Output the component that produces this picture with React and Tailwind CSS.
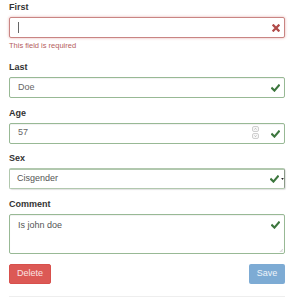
import React from 'react'

function Check({ className }) {
  return (
    <svg viewBox="0 0 10 9" className={className} aria-hidden="true">
      <path d="M1.2 4.8 L3.8 7.4 L8.8 1.6" fill="none" stroke="#3c763d" strokeWidth="2.4" strokeLinecap="square" />
    </svg>
  )
}

function Cross({ className }) {
  return (
    <svg viewBox="0 0 8 8" className={className} aria-hidden="true">
      <path d="M1.4 1.4 L6.6 6.6 M6.6 1.4 L1.4 6.6" stroke="#b04a48" strokeWidth="2.2" strokeLinecap="square" />
    </svg>
  )
}

function Field({ label, children }) {
  return (
    <div className="flex flex-col gap-[4px]">
      <div className="h-[12px] text-[9px] font-bold leading-[12px] text-[#333]">{label}</div>
      {children}
    </div>
  )
}

const okBox =
  'relative flex h-[21px] items-center rounded-[2px] border border-[#98b995] bg-white pl-[8px] text-[9px] text-[#666] shadow-[inset_0_1px_1px_rgba(0,0,0,0.06)]'

export default function App() {
  return (
    <div
      className="w-[298px] bg-white pl-[9px] pr-[13px] pt-[1px]"
      style={{ fontFamily: '"Liberation Sans", Arial, sans-serif' }}
    >
      <Field label="First">
        <div className="relative flex h-[21px] items-center rounded-[2px] border border-[#c98583] bg-white pl-[8px] shadow-[0_0_3px_#e6b1af]">
          <div className="h-[11px] w-px bg-[#666]" />
          <Cross className="absolute right-[4px] top-[6px] h-[8px] w-[8px]" />
        </div>
      </Field>
      <div className="mt-[3px] mb-[10px] h-[10px] text-[7.5px] leading-[10px] text-[#b5605e]">This field is required</div>

      <div className="flex flex-col gap-[8.5px]">
        <Field label="Last">
          <div className={okBox}>
            Doe
            <Check className="absolute right-[4px] top-[6px] h-[8px] w-[9px]" />
          </div>
        </Field>

        <Field label="Age">
          <div className={okBox}>
            57
            <div className="absolute right-[25px] top-[2px] flex flex-col gap-[1px]">
              <div className="flex h-[6px] w-[7px] items-center justify-center rounded-[2px] border border-[#cfcfcf] bg-[#f7f7f7]">
                <svg viewBox="0 0 5 3" className="h-[2px] w-[3px]"><path d="M0.5 2.5 L2.5 0.5 L4.5 2.5" fill="none" stroke="#888" strokeWidth="0.8" /></svg>
              </div>
              <div className="flex h-[6px] w-[7px] items-center justify-center rounded-[2px] border border-[#cfcfcf] bg-[#f7f7f7]">
                <svg viewBox="0 0 5 3" className="h-[2px] w-[3px]"><path d="M0.5 0.5 L2.5 2.5 L4.5 0.5" fill="none" stroke="#888" strokeWidth="0.8" /></svg>
              </div>
            </div>
            <Check className="absolute right-[4px] top-[6px] h-[8px] w-[9px]" />
          </div>
        </Field>

        <Field label="Sex">
          <div className="relative flex h-[21px] items-center rounded-[2px] border border-[#b1c8ae] border-t-2 border-r-[#8a9a88] bg-white pl-[7px] text-[9px] text-[#555] shadow-[1px_1px_1px_rgba(0,0,0,0.12)]">
            Cisgender
            <Check className="absolute right-[5px] top-[5px] h-[8px] w-[9px]" />
            <svg viewBox="0 0 4 3" className="absolute right-[0px] top-[8px] h-[2px] w-[3px]"><path d="M0 0 L4 0 L2 3 Z" fill="#222" /></svg>
          </div>
        </Field>

        <Field label="Comment">
          <div className="relative h-[40px] rounded-[2px] border border-[#98b995] bg-white pl-[8px] pt-[4px] text-[9px] leading-[12px] text-[#555] shadow-[inset_0_1px_1px_rgba(0,0,0,0.06)]">
            Is john doe
            <Check className="absolute right-[4px] top-[6px] h-[8px] w-[9px]" />
            <svg viewBox="0 0 5 5" className="absolute bottom-[1px] right-[1px] h-[4px] w-[4px]">
              <path d="M1 5 L5 1 M3 5 L5 3" stroke="#aaa" strokeWidth="0.7" />
            </svg>
          </div>
        </Field>
      </div>

      <div className="mt-[10px] flex items-center justify-between">
        <div className="flex h-[20px] w-[42px] items-center justify-center rounded-[2px] border border-[#d8504c] bg-[#dc5955] text-[9px] text-[#fbe3e2]">
          Delete
        </div>
        <div className="flex h-[20px] w-[36px] items-center justify-center rounded-[2px] bg-[#7dabd4] text-[9px] text-[#eef4fa]">
          Save
        </div>
      </div>

      <div className="mt-[12px] h-[3px] border-t border-[#eee]" />
    </div>
  )
}
